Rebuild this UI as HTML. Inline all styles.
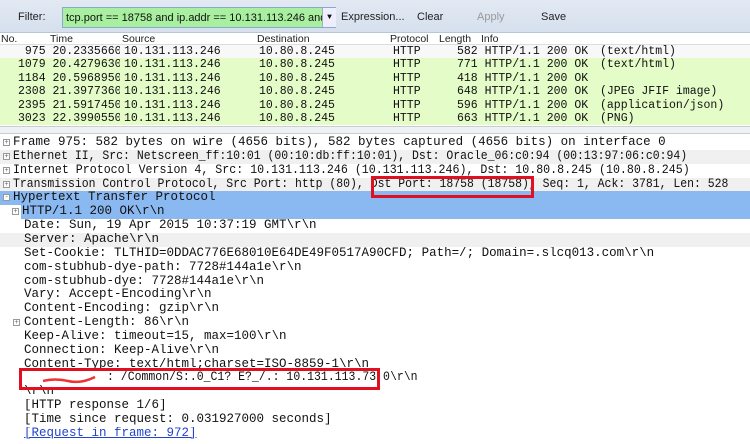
<!DOCTYPE html>
<html><head><style>
*{margin:0;padding:0;box-sizing:border-box}
body{width:750px;height:443px;overflow:hidden;background:#fff;position:relative;font-family:"Liberation Mono",monospace;font-size:12.5px;color:#111}
.tb{position:absolute;left:0;top:0;width:750px;height:33px;background:linear-gradient(#e2e9f3,#d6e0ee);border-bottom:1px solid #b9c6d8}
.tb span{position:absolute;top:11px;font-family:"Liberation Sans",sans-serif;font-size:11px;color:#222}
.flt{position:absolute;left:62px;top:7px;width:274px;height:21px;background:#a8f0a0;border:1px solid #8ac;font-family:"Liberation Sans",sans-serif;font-size:11px;padding:4px 0 0 3px;white-space:nowrap;overflow:hidden}
.dd{position:absolute;left:322px;top:8px;width:14px;height:19px;background:#eef;border-left:1px solid #aab;font-size:8px;text-align:center;line-height:19px}
.hd{position:absolute;top:33px;left:0;width:750px;height:12px;background:#fff;border-bottom:1px solid #ddd}
.hd span{position:absolute;top:0;font-family:"Liberation Sans",sans-serif;font-size:10.5px;color:#222}
.row{position:absolute;left:0;width:750px;height:13.4px;background:#e4fcc8;white-space:pre;line-height:13.4px;font-size:11.5px}
.row span{position:absolute;top:0}
.row .t{overflow:hidden;width:102px}
.ln{position:absolute;left:0;width:750px;height:13.85px;white-space:pre;line-height:13.85px;overflow:hidden}
.ln i{font-style:normal;display:inline-block;transform-origin:0 50%}
.g{background:#f0f0f0}
.pl{position:absolute;width:7px;height:7px;border:1px solid #999;font-size:7px;line-height:5px;text-align:center;color:#666;font-family:"Liberation Sans",sans-serif;background:#fff}
.box{position:absolute;border:3px solid #e01020}
.d{position:absolute;left:0;top:1px;width:750px;height:443px}
</style></head><body>
<div class="tb">
<span style="left:18px">Filter:</span>
<div class="flt">tcp.port == 18758 and ip.addr == 10.131.113.246 and h</div>
<div class="dd">▼</div>
<span style="left:341px">Expression...</span>
<span style="left:417px">Clear</span>
<span style="left:477px;color:#999">Apply</span>
<span style="left:541px">Save</span>
</div>
<div class="hd"><span style="left:1px">No.</span><span style="left:50px">Time</span><span style="left:122px">Source</span><span style="left:257px">Destination</span><span style="left:390px">Protocol</span><span style="left:439px">Length</span><span style="left:481px">Info</span></div>

<div class="row" style="top:45px;background:#f8f8f8"><span class="t" style="left:18px"> 975 20.2335660</span><span style="left:124px">10.131.113.246</span><span style="left:259px">10.80.8.245</span><span style="left:393px">HTTP</span><span style="left:457px">582 HTTP/1.1 200 OK</span><span style="left:600px">(text/html)</span></div>
<div class="row" style="top:58.4px"><span class="t" style="left:18px">1079 20.4279630</span><span style="left:124px">10.131.113.246</span><span style="left:259px">10.80.8.245</span><span style="left:393px">HTTP</span><span style="left:457px">771 HTTP/1.1 200 OK</span><span style="left:600px">(text/html)</span></div>
<div class="row" style="top:71.8px"><span class="t" style="left:18px">1184 20.5968950</span><span style="left:124px">10.131.113.246</span><span style="left:259px">10.80.8.245</span><span style="left:393px">HTTP</span><span style="left:457px">418 HTTP/1.1 200 OK</span></div>
<div class="row" style="top:85.2px"><span class="t" style="left:18px">2308 21.3977360</span><span style="left:124px">10.131.113.246</span><span style="left:259px">10.80.8.245</span><span style="left:393px">HTTP</span><span style="left:457px">648 HTTP/1.1 200 OK</span><span style="left:600px">(JPEG JFIF image)</span></div>
<div class="row" style="top:98.6px"><span class="t" style="left:18px">2395 21.5917450</span><span style="left:124px">10.131.113.246</span><span style="left:259px">10.80.8.245</span><span style="left:393px">HTTP</span><span style="left:457px">596 HTTP/1.1 200 OK</span><span style="left:600px">(application/json)</span></div>
<div class="row" style="top:112px"><span class="t" style="left:18px">3023 22.3990550</span><span style="left:124px">10.131.113.246</span><span style="left:259px">10.80.8.245</span><span style="left:393px">HTTP</span><span style="left:457px">663 HTTP/1.1 200 OK</span><span style="left:600px">(PNG)</span></div>
<div style="position:absolute;top:126px;left:0;width:750px;height:8px;background:#eef1f5;border-top:1px solid #ccc;border-bottom:1px solid #ccc"></div>

<div class="d">
<div class="ln" style="top:135px;padding-left:13px"><span class="pl" style="left:3px;top:3px">+</span>Frame 975: 582 bytes on wire (4656 bits), 582 bytes captured (4656 bits) on interface 0</div>
<div class="ln g" style="top:148.85px;padding-left:13px"><span class="pl" style="left:3px;top:3px">+</span><i style="transform:scaleX(0.917)">Ethernet II, Src: Netscreen_ff:10:01 (00:10:db:ff:10:01), Dst: Oracle_06:c0:94 (00:13:97:06:c0:94)</i></div>
<div class="ln" style="top:162.7px;padding-left:13px"><span class="pl" style="left:3px;top:3px">+</span><i style="transform:scaleX(0.93)">Internet Protocol Version 4, Src: 10.131.113.246 (10.131.113.246), Dst: 10.80.8.245 (10.80.8.245)</i></div>
<div class="ln g" style="top:176.55px;padding-left:13px"><span class="pl" style="left:3px;top:3px">+</span><i style="transform:scaleX(0.917)">Transmission Control Protocol, Src Port: http (80), Dst Port: 18758 (18758), Seq: 1, Ack: 3781, Len: 528</i></div>
<div class="ln" style="top:190.4px;padding-left:13px;background:#8ab8f0"><span class="pl" style="left:3px;top:3px">-</span>Hypertext Transfer Protocol</div>
<div class="ln" style="top:204.25px;padding-left:22px;background:linear-gradient(90deg,#fff 21px,#8ab8f0 21px)"><span class="pl" style="left:12px;top:3px">+</span>HTTP/1.1 200 OK\r\n</div>
<div class="ln" style="top:218.1px;padding-left:24px">Date: Sun, 19 Apr 2015 10:37:19 GMT\r\n</div>
<div class="ln g" style="top:231.95px;padding-left:24px">Server: Apache\r\n</div>
<div class="ln" style="top:245.8px;padding-left:24px">Set-Cookie: TLTHID=0DDAC776E68010E64DE49F0517A90CFD; Path=/; Domain=.slcq013.com\r\n</div>
<div class="ln" style="top:259.65px;padding-left:24px">com-stubhub-dye-path: 7728#144a1e\r\n</div>
<div class="ln" style="top:273.5px;padding-left:24px">com-stubhub-dye: 7728#144a1e\r\n</div>
<div class="ln" style="top:287.35px;padding-left:24px">Vary: Accept-Encoding\r\n</div>
<div class="ln" style="top:301.2px;padding-left:24px">Content-Encoding: gzip\r\n</div>
<div class="ln" style="top:315.05px;padding-left:24px"><span class="pl" style="left:13px;top:3px">+</span>Content-Length: 86\r\n</div>
<div class="ln" style="top:328.9px;padding-left:24px">Keep-Alive: timeout=15, max=100\r\n</div>
<div class="ln" style="top:342.75px;padding-left:24px">Connection: Keep-Alive\r\n</div>
<div class="ln" style="top:356.6px;padding-left:24px">Content-Type: text/html;charset=ISO-8859-1\r\n</div>
<div class="ln" style="top:370.45px;padding-left:107px"><i style="transform:scaleX(0.92)">: /Common/S:.0_C1? E?_/.: 10.131.113.73 0\r\n</i></div>
<svg style="position:absolute;left:40px;top:374px" width="60" height="10"><path d="M3 6 Q15 3 28 6 T55 2" stroke="#e33" stroke-width="2.5" fill="none"/></svg>
<div class="ln" style="top:384.3px;padding-left:24px">\r\n</div>
<div class="ln" style="top:398.15px;padding-left:24px">[HTTP response 1/6]</div>
<div class="ln" style="top:412px;padding-left:24px">[Time since request: 0.031927000 seconds]</div>
<div class="ln" style="top:425.85px;padding-left:24px;color:#2244cc"><u>[Request in frame: 972]</u></div>
</div>

<div class="box" style="left:371px;top:176px;width:163px;height:22px"></div>
<div class="box" style="left:19px;top:368px;width:361px;height:22px"></div>
</body></html>
